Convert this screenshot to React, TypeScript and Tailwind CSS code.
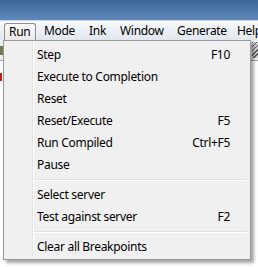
import React from 'react';

const menuBar = [
  { label: 'Run', w: 'w-[32px]', active: true },
  { label: 'Mode', w: 'w-[42px]' },
  { label: 'Ink', w: 'w-[28px]' },
  { label: 'Window', w: 'w-[54px]' },
  { label: 'Generate', w: 'w-[57px]' },
  { label: 'Help', w: 'w-[40px]' },
];

type Entry = { label: string; keys?: string } | 'sep';

const entries: Entry[] = [
  { label: 'Step', keys: 'F10' },
  { label: 'Execute to Completion' },
  { label: 'Reset' },
  { label: 'Reset/Execute', keys: 'F5' },
  { label: 'Run Compiled', keys: 'Ctrl+F5' },
  { label: 'Pause' },
  'sep',
  { label: 'Select server' },
  { label: 'Test against server', keys: 'F2' },
  'sep',
  { label: 'Clear all Breakpoints' },
];

export default function App() {
  return (
    <div className="relative w-[258px] h-[267px] overflow-hidden bg-white flex flex-col font-['Noto_Sans',sans-serif] text-[12px] tracking-[-0.3px] text-black">
      {/* title bar */}
      <div className="h-[20px] bg-gradient-to-b from-[#3c6797] to-[#5f89bb] shrink-0" />
      <div className="h-[1px] bg-[#c9d5e4] shrink-0" />

      {/* menu bar */}
      <div className="h-[19px] shrink-0 flex items-stretch gap-[3px] pl-[4px] bg-gradient-to-b from-[#f7f9fc] to-[#e1e7f0] whitespace-nowrap">
        {menuBar.map((m) => (
          <div
            key={m.label}
            className={
              m.active
                ? `${m.w} shrink-0 flex items-center mt-[2px] rounded-t-[3px] border border-b-0 border-[#8c8e91] bg-gradient-to-b from-[#fbfbfb] to-[#e8e8e8] pl-[4px]`
                : `${m.w} shrink-0 flex items-center pl-[5px]`
            }
          >
            {m.label}
          </div>
        ))}
      </div>

      {/* window content behind the menu */}
      <div className="h-[21px] shrink-0 flex items-center justify-between bg-[#eceef1] border-b border-[#a3a3a3]">
        <div className="w-[3px] h-[9px] bg-[#6f7c4e]" />
        <div className="w-[6px] h-[16px] bg-[repeating-linear-gradient(135deg,#5a5a5a_0px,#5a5a5a_1px,#d0d0d0_1px,#d0d0d0_3px)]" />
      </div>
      <div className="flex-1 flex">
        <div className="w-[2px] mt-[12px] h-[8px] bg-[#b32020]" />
      </div>

      {/* Run dropdown */}
      <div className="absolute left-[3px] top-[40px] w-[248px] border border-[#979797] bg-[#f0f0f0] shadow-[3px_3px_3px_rgba(0,0,0,0.35)] flex">
        <div className="w-[28px] shrink-0" />
        <div className="w-[1px] bg-[#e2e3e3] shrink-0" />
        <div className="w-[1px] bg-white shrink-0" />
        <div className="flex-1 flex flex-col pt-[3px] pb-[1px]">
          {entries.map((e, i) =>
            e === 'sep' ? (
              <div key={i} className="h-[8px] flex flex-col justify-center mr-[3px]">
                <div className="h-[1px] bg-[#e0e0e0]" />
                <div className="h-[1px] bg-white" />
              </div>
            ) : (
              <div key={i} className="h-[22px] flex items-center justify-between pl-[3px] pr-[20px] whitespace-nowrap">
                <span>{e.label}</span>
                {e.keys && <span>{e.keys}</span>}
              </div>
            )
          )}
        </div>
      </div>
    </div>
  );
}
